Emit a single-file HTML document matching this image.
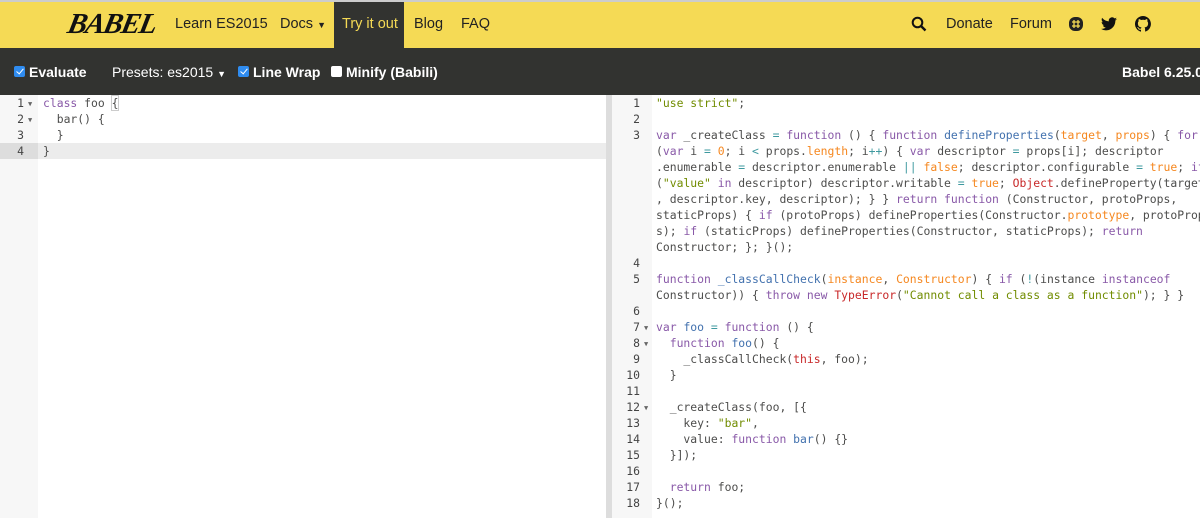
<!DOCTYPE html><html><head><meta charset="utf-8"><style>
*{margin:0;padding:0;box-sizing:border-box}
body{width:1200px;height:518px;overflow:hidden;background:#fff;font-family:"Liberation Sans",sans-serif;position:relative}
.top{position:absolute;left:0;top:0;width:1200px;height:2px;background:#ccc}
.nav{position:absolute;left:0;top:2px;width:1200px;height:46px;background:#f5da55}
.nav a{position:absolute;top:14px;font-size:14.5px;color:#222;text-decoration:none;white-space:nowrap}
.try{position:absolute;left:334px;top:0;width:70px;height:46px;background:#323330}
.bar{position:absolute;left:0;top:48px;width:1200px;height:47px;background:#323330;color:#fff;font-size:14px;font-weight:bold}
.bar span{position:absolute;top:16px;white-space:nowrap}
.cb{position:absolute;top:18px;width:11px;height:11px;border-radius:2px;background:#fff}
.cb.on{background:#2f8cf0}
.cb.on:after{content:"";position:absolute;left:3.5px;top:1px;width:3px;height:6px;border:solid #fff;border-width:0 1.5px 1.5px 0;transform:rotate(40deg)}
.code{font-family:"DejaVu Sans Mono",monospace;font-size:11.4px;color:#4d4d4c;position:absolute;white-space:pre}
.r{position:absolute;height:16px;line-height:17px}
.g{position:absolute;background:#f7f7f7}
.ln{color:#444;text-align:right;width:28px}
.k{color:#8959a8}.d{color:#4271ae}.o{color:#3e999f}.n{color:#f5871f}.s{color:#718c00}.e{color:#c82829}
.ar{font-size:7px;color:#666;vertical-align:1px}
</style></head><body>
<div class="top"></div>
<div class="nav">
<div style="position:absolute;left:68px;top:6px;font:italic bold 29px 'Liberation Serif',serif;color:#111;letter-spacing:-1.5px;transform:skewX(-12deg)">BABEL</div>
<div class="try"></div>
<a style="left:175px">Learn ES2015</a>
<a style="left:280px">Docs <span style="font-size:9px">▼</span></a>
<a style="left:342px;color:#f5da55">Try it out</a>
<a style="left:414px">Blog</a>
<a style="left:461px">FAQ</a>
<svg style="position:absolute;left:911px;top:14px" width="16" height="16" viewBox="0 0 16 16"><circle cx="6.5" cy="6.5" r="4.8" fill="none" stroke="#111" stroke-width="2"/><path d="M10 10l4.5 4.5" stroke="#111" stroke-width="2.4"/></svg>
<a style="left:946px">Donate</a>
<a style="left:1010px">Forum</a>
<svg style="position:absolute;left:1068px;top:14px" width="16" height="16" viewBox="0 0 16 16"><rect x="1" y="1" width="14" height="14" rx="6" fill="#222"/><path d="M6 4v8M10 4v8M4 6h8M4 10h8" stroke="#f5da55" stroke-width="1.3"/></svg>
<svg style="position:absolute;left:1101px;top:15px" width="16" height="14" viewBox="0 0 24 20"><path d="M24 2.4a10 10 0 0 1-2.8.8A5 5 0 0 0 23.3.4a10 10 0 0 1-3.1 1.2A4.9 4.9 0 0 0 11.8 6 14 14 0 0 1 1.7.9a4.9 4.9 0 0 0 1.5 6.6 4.9 4.9 0 0 1-2.2-.6 4.9 4.9 0 0 0 3.9 4.9 5 5 0 0 1-2.2.1 4.9 4.9 0 0 0 4.6 3.4A9.9 9.9 0 0 1 0 17.3 14 14 0 0 0 7.5 19.5c9.1 0 14-7.5 14-14v-.6A10 10 0 0 0 24 2.4z" fill="#111"/></svg>
<svg style="position:absolute;left:1135px;top:14px" width="16" height="16" viewBox="0 0 16 16"><path fill="#111" d="M8 0a8 8 0 0 0-2.5 15.6c.4 0 .5-.2.5-.4v-1.5c-2.2.5-2.7-1-2.7-1-.4-.9-.9-1.2-.9-1.2-.7-.5.1-.5.1-.5.8.1 1.2.8 1.2.8.7 1.3 1.9.9 2.3.7.1-.5.3-.9.5-1.1-1.8-.2-3.6-.9-3.6-4 0-.9.3-1.6.8-2.1-.1-.2-.4-1 .1-2.1 0 0 .7-.2 2.2.8a7.4 7.4 0 0 1 4 0c1.5-1 2.2-.8 2.2-.8.4 1.1.2 1.9.1 2.1.5.6.8 1.3.8 2.1 0 3.1-1.9 3.8-3.6 4 .3.3.6.8.6 1.5v2.2c0 .2.1.5.6.4A8 8 0 0 0 8 0z"/></svg>
</div>
<div class="bar">
<div class="cb on" style="left:14px"></div><span style="left:29px">Evaluate</span>
<span style="left:112px;font-weight:normal">Presets: es2015 <span style="position:static;font-size:9px">▼</span></span>
<div class="cb on" style="left:238px"></div><span style="left:253px">Line Wrap</span>
<div class="cb" style="left:331px"></div><span style="left:346px">Minify (Babili)</span>
<span style="left:1122px">Babel 6.25.0</span>
</div>
<div class="g" style="left:0;top:95px;width:38px;height:423px"></div>
<div style="position:absolute;left:0;top:143px;width:606px;height:16px;background:#ececec"></div>
<div style="position:absolute;left:0;top:143px;width:38px;height:16px;background:#ddd"></div>
<div class="code" style="left:0;top:95px">
<div class="r ln" style="top:0;width:24px">1</div><div class="r" style="left:28px;top:0"><span class="ar">▼</span></div>
<div class="r ln" style="top:16px;width:24px">2</div><div class="r" style="left:28px;top:16px"><span class="ar">▼</span></div>
<div class="r ln" style="top:32px;width:24px">3</div>
<div class="r ln" style="top:48px;width:24px">4</div>
<div class="r" style="left:43px;top:0"><span class="k">class</span> foo <span style="outline:1px solid #ccc">{</span></div>
<div class="r" style="left:43px;top:16px">  bar() {</div>
<div class="r" style="left:43px;top:32px">  }</div>
<div class="r" style="left:43px;top:48px">}</div>
</div>
<div style="position:absolute;left:606px;top:95px;width:6px;height:423px;background:#ddd"></div>
<div class="g" style="left:612px;top:95px;width:40px;height:423px"></div>
<div class="code" style="left:612px;top:95px;width:588px;height:423px;overflow:hidden">
<div class="r ln" style="top:0">1</div><div class="r ln" style="top:16px">2</div><div class="r ln" style="top:32px">3</div>
<div class="r ln" style="top:160px">4</div><div class="r ln" style="top:176px">5</div><div class="r ln" style="top:208px">6</div>
<div class="r ln" style="top:224px">7</div><div class="r ln" style="top:240px">8</div><div class="r ln" style="top:256px">9</div>
<div class="r ln" style="top:272px">10</div><div class="r ln" style="top:288px">11</div><div class="r ln" style="top:304px">12</div>
<div class="r ln" style="top:320px">13</div><div class="r ln" style="top:336px">14</div><div class="r ln" style="top:352px">15</div>
<div class="r ln" style="top:368px">16</div><div class="r ln" style="top:384px">17</div><div class="r ln" style="top:400px">18</div>
<div class="r" style="left:32px;top:224px"><span class="ar">▼</span></div><div class="r" style="left:32px;top:240px"><span class="ar">▼</span></div><div class="r" style="left:32px;top:304px"><span class="ar">▼</span></div>
<div style="left:44px;position:absolute;top:0">
<div class="r" style="top:0"><span class="s">"use strict"</span>;</div>
<div class="r" style="top:32px"><span class="k">var</span> _createClass <span class="o">=</span> <span class="k">function</span> () { <span class="k">function</span> <span class="d">defineProperties</span>(<span class="n">target</span>, <span class="n">props</span>) { <span class="k">for</span></div>
<div class="r" style="top:48px">(<span class="k">var</span> i <span class="o">=</span> <span class="n">0</span>; i <span class="o">&lt;</span> props.<span class="n">length</span>; i<span class="o">++</span>) { <span class="k">var</span> descriptor <span class="o">=</span> props[i]; descriptor</div>
<div class="r" style="top:64px">.enumerable <span class="o">=</span> descriptor.enumerable <span class="o">||</span> <span class="n">false</span>; descriptor.configurable <span class="o">=</span> <span class="n">true</span>; <span class="k">if</span></div>
<div class="r" style="top:80px">(<span class="s">"value"</span> <span class="k">in</span> descriptor) descriptor.writable <span class="o">=</span> <span class="n">true</span>; <span class="e">Object</span>.defineProperty(target</div>
<div class="r" style="top:96px">, descriptor.key, descriptor); } } <span class="k">return</span> <span class="k">function</span> (Constructor, protoProps,</div>
<div class="r" style="top:112px">staticProps) { <span class="k">if</span> (protoProps) defineProperties(Constructor.<span class="n">prototype</span>, protoProp</div>
<div class="r" style="top:128px">s); <span class="k">if</span> (staticProps) defineProperties(Constructor, staticProps); <span class="k">return</span></div>
<div class="r" style="top:144px">Constructor; }; }();</div>
<div class="r" style="top:176px"><span class="k">function</span> <span class="d">_classCallCheck</span>(<span class="n">instance</span>, <span class="n">Constructor</span>) { <span class="k">if</span> (<span class="o">!</span>(instance <span class="k">instanceof</span></div>
<div class="r" style="top:192px">Constructor)) { <span class="k">throw</span> <span class="k">new</span> <span class="e">TypeError</span>(<span class="s">"Cannot call a class as a function"</span>); } }</div>
<div class="r" style="top:224px"><span class="k">var</span> <span class="d">foo</span> <span class="o">=</span> <span class="k">function</span> () {</div>
<div class="r" style="top:240px">  <span class="k">function</span> <span class="d">foo</span>() {</div>
<div class="r" style="top:256px">    _classCallCheck(<span class="e">this</span>, foo);</div>
<div class="r" style="top:272px">  }</div>
<div class="r" style="top:304px">  _createClass(foo, [{</div>
<div class="r" style="top:320px">    key: <span class="s">"bar"</span>,</div>
<div class="r" style="top:336px">    value: <span class="k">function</span> <span class="d">bar</span>() {}</div>
<div class="r" style="top:352px">  }]);</div>
<div class="r" style="top:384px">  <span class="k">return</span> foo;</div>
<div class="r" style="top:400px">}();</div>
</div></div>
</body></html>
